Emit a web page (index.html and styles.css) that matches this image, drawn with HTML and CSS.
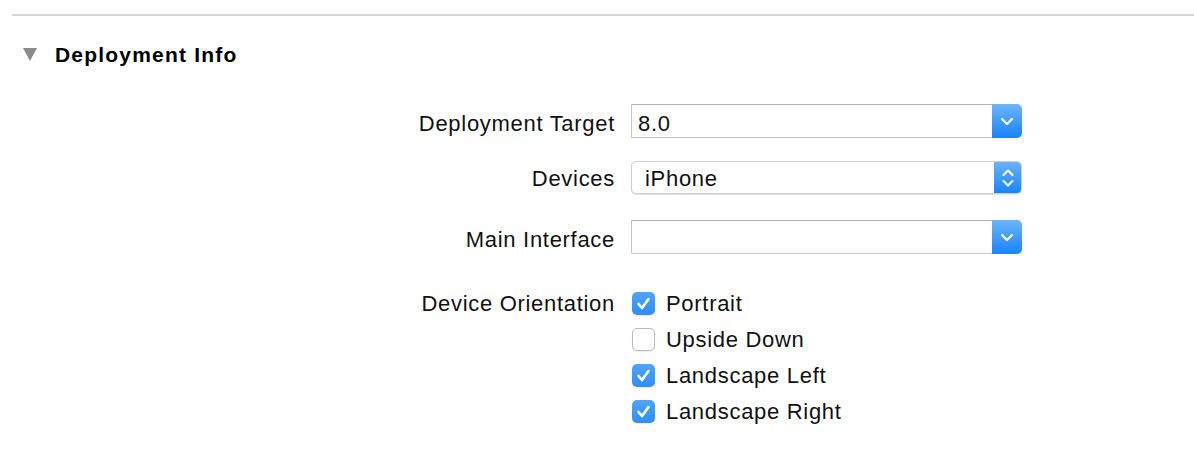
FILE: index.html
```html
<!DOCTYPE html>
<html>
<head>
<meta charset="utf-8">
<link rel="stylesheet" href="styles.css">
</head>
<body>
<div class="pane">
  <div class="rule"></div>
  <div class="section-head">
    <span class="disclosure"></span>
    <h2 class="title">Deployment Info</h2>
  </div>
  <div class="form">
    <div class="row">
      <div class="label">Deployment Target</div>
      <div class="combo">
        <div class="field">8.0</div>
        <div class="btn">
          <svg width="14" height="10" viewBox="0 0 14 10"><path d="M2 3 L7 8 L12 3" fill="none" stroke="#fff" stroke-width="2.2" stroke-linecap="round" stroke-linejoin="round"/></svg>
        </div>
      </div>
    </div>
    <div class="row row-devices">
      <div class="label label-devices">Devices</div>
      <div class="popup">
        <div class="popup-value">iPhone</div>
        <div class="popup-btn">
          <svg width="14" height="22" viewBox="0 0 14 22"><path d="M2.5 8 L7 3.5 L11.5 8 M2.5 14 L7 18.5 L11.5 14" fill="none" stroke="#fff" stroke-width="2" stroke-linecap="round" stroke-linejoin="round"/></svg>
        </div>
      </div>
    </div>
    <div class="row row-main">
      <div class="label">Main Interface</div>
      <div class="combo">
        <div class="field"></div>
        <div class="btn">
          <svg width="14" height="10" viewBox="0 0 14 10"><path d="M2 3 L7 8 L12 3" fill="none" stroke="#fff" stroke-width="2.2" stroke-linecap="round" stroke-linejoin="round"/></svg>
        </div>
      </div>
    </div>
    <div class="row row-orient">
      <div class="label label-check">Device Orientation</div>
      <div class="checks">
        <div class="check"><span class="box on"><svg width="23" height="23" viewBox="0 0 23 23"><path d="M6.5 12 L10 16 L16.5 7" fill="none" stroke="#fff" stroke-width="2.6" stroke-linecap="round" stroke-linejoin="round"/></svg></span><span class="check-text">Portrait</span></div>
        <div class="check"><span class="box"></span><span class="check-text">Upside Down</span></div>
        <div class="check"><span class="box on"><svg width="23" height="23" viewBox="0 0 23 23"><path d="M6.5 12 L10 16 L16.5 7" fill="none" stroke="#fff" stroke-width="2.6" stroke-linecap="round" stroke-linejoin="round"/></svg></span><span class="check-text">Landscape Left</span></div>
        <div class="check"><span class="box on"><svg width="23" height="23" viewBox="0 0 23 23"><path d="M6.5 12 L10 16 L16.5 7" fill="none" stroke="#fff" stroke-width="2.6" stroke-linecap="round" stroke-linejoin="round"/></svg></span><span class="check-text">Landscape Right</span></div>
      </div>
    </div>
  </div>
</div>
</body>
</html>
```

FILE: styles.css
```css
html, body {
  margin: 0;
  padding: 0;
  background: #ffffff;
}
body {
  font-family: "Liberation Sans", Arial, sans-serif;
  color: #111111;
}
.pane {
  width: 1194px;
  height: 456px;
  overflow: hidden;
}
.rule {
  margin: 14px 0 0 12px;
  height: 2px;
  background: #d6d6d6;
}
.section-head {
  display: flex;
  align-items: flex-start;
  margin-top: 27px;
  padding-left: 23px;
}
.disclosure {
  width: 0;
  height: 0;
  margin-top: 5px;
  border-left: 7px solid transparent;
  border-right: 7px solid transparent;
  border-top: 13px solid #8a8a8a;
}
.title {
  margin: 0 0 0 18px;
  font-size: 21px;
  line-height: 24px;
  font-weight: bold;
  letter-spacing: 1.2px;
  color: #000;
}
.form {
  margin-top: 37px;
}
.row {
  display: grid;
  grid-template-columns: 614px 391px;
  column-gap: 17px;
  align-items: start;
  height: 34px;
}
.row-devices {
  margin-top: 23px;
  height: 33px;
}
.row-main {
  margin-top: 26px;
}
.row-orient {
  margin-top: 38px;
  height: auto;
}
.label {
  text-align: right;
  font-size: 22px;
  line-height: 23px;
  letter-spacing: 0.7px;
  margin-right: -1px;
  padding-top: 8px;
  white-space: nowrap;
}
.label-devices {
  padding-top: 6px;
}
.label-check {
  padding-top: 0;
}
.combo {
  display: flex;
  height: 34px;
}
.field {
  flex: 1;
  box-sizing: border-box;
  height: 34px;
  border: 1px solid #c6c6c6;
  border-top-color: #b4b4b4;
  border-right: none;
  padding: 7px 0 0 6px;
  font-size: 22px;
  line-height: 23px;
  letter-spacing: 0.7px;
  color: #111;
}
.btn {
  width: 30px;
  height: 34px;
  border-radius: 0 5px 5px 0;
  background: linear-gradient(#6db5fb, #1783fb);
  display: flex;
  align-items: center;
  justify-content: center;
}
.popup {
  display: flex;
  height: 33px;
  box-sizing: border-box;
  border: 1px solid #cfcfcf;
  border-radius: 5px;
  box-shadow: 0 1px 1px rgba(0, 0, 0, 0.12);
  overflow: hidden;
  background: #fff;
}
.popup-value {
  flex: 1;
  padding: 5px 0 0 13px;
  font-size: 22px;
  line-height: 23px;
  letter-spacing: 0.7px;
}
.popup-btn {
  width: 28px;
  margin: -1px -1px -1px 0;
  background: linear-gradient(#6db5fb, #1783fb);
  display: flex;
  align-items: center;
  justify-content: center;
}
.checks {
  display: flex;
  flex-direction: column;
  gap: 13px;
}
.check {
  display: flex;
  align-items: center;
  gap: 11px;
  height: 23px;
  padding-left: 1px;
}
.box {
  width: 23px;
  height: 23px;
  box-sizing: border-box;
  border-radius: 5px;
  border: 1px solid #b9b9b9;
  background: #fff;
  box-shadow: 0 1px 1px rgba(0, 0, 0, 0.08);
  display: flex;
}
.box.on {
  border: none;
  background: linear-gradient(#4ea5fc, #2f8ef7);
}
.check-text {
  font-size: 22px;
  line-height: 23px;
  letter-spacing: 0.7px;
}
```
